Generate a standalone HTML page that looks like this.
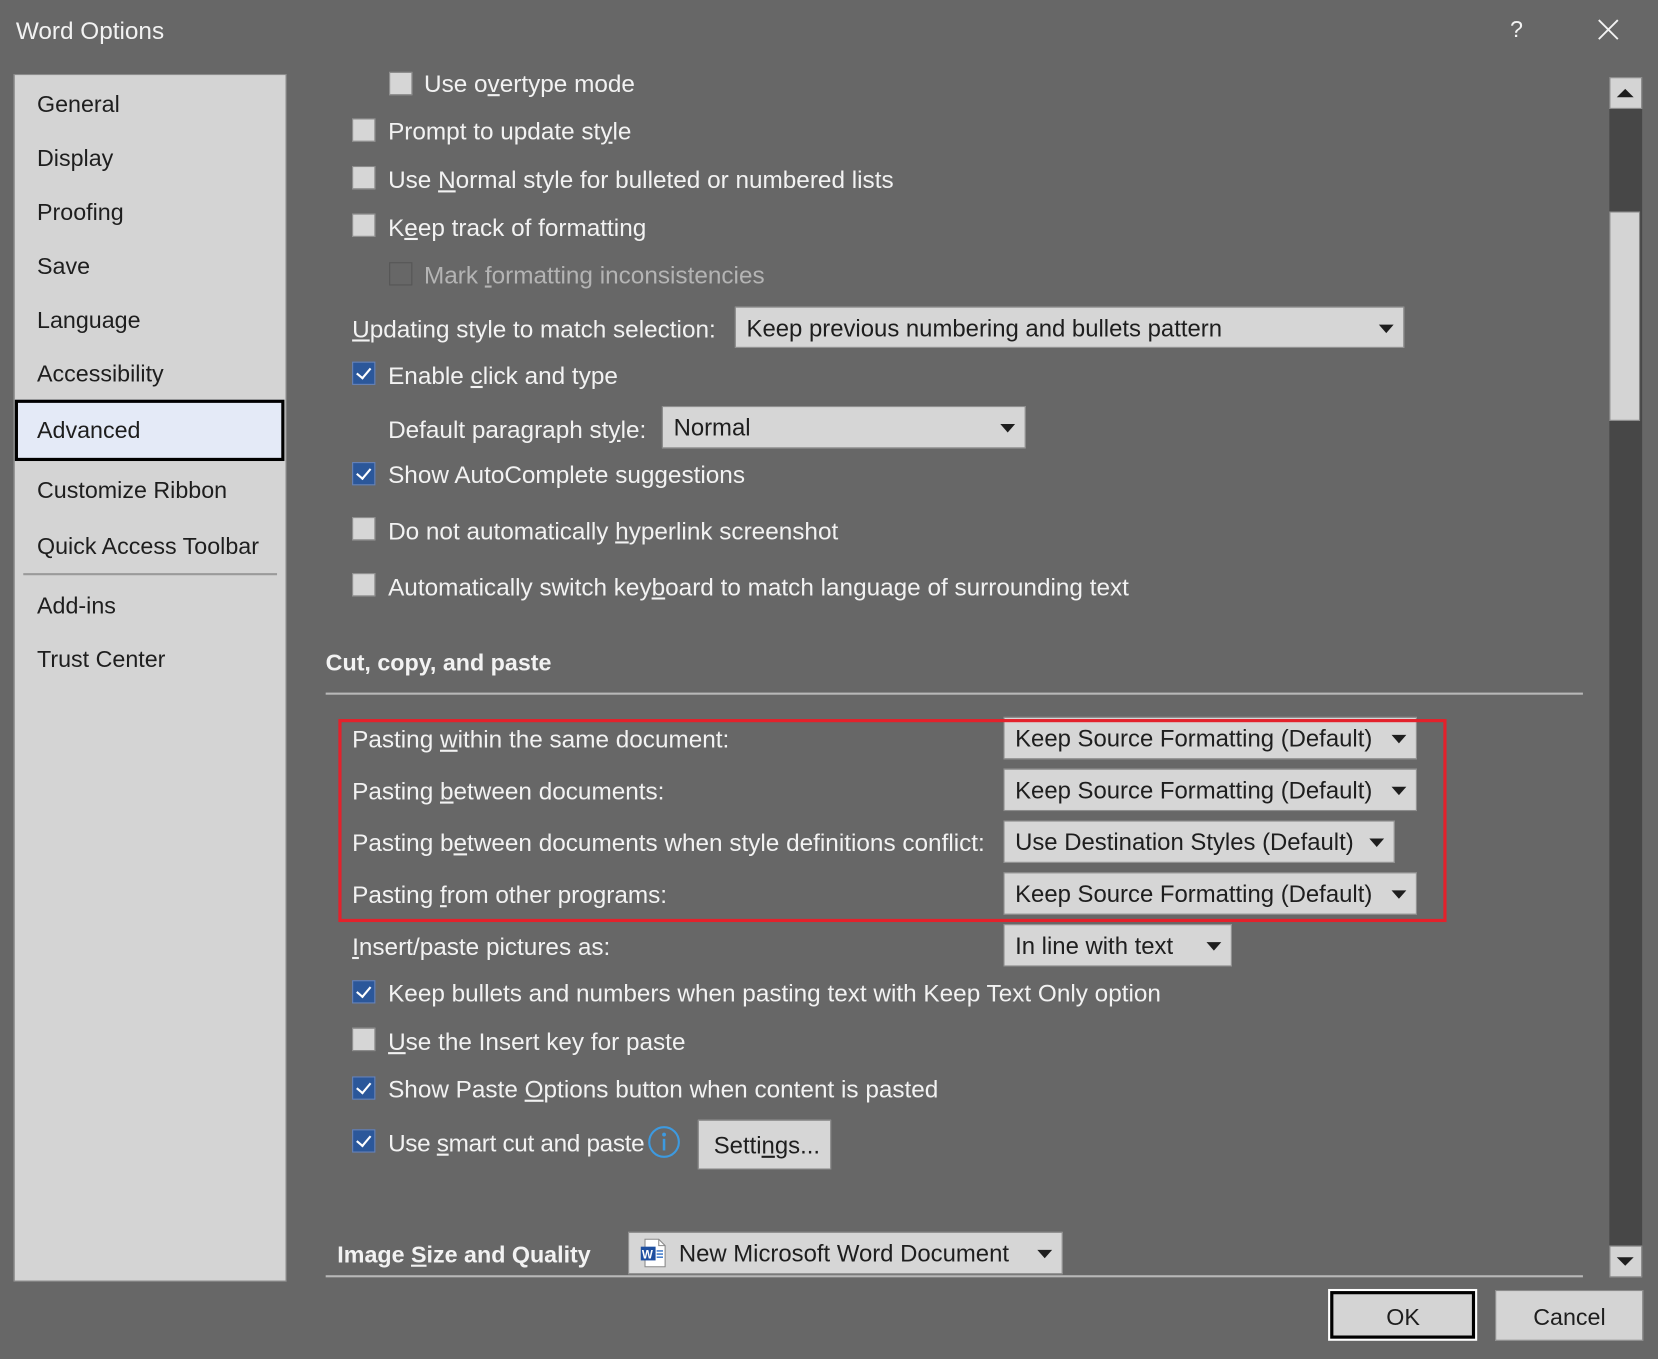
<!DOCTYPE html>
<html><head><meta charset="utf-8"><style>
html,body{margin:0;padding:0;background:#676767;width:1658px;height:1359px;overflow:hidden}
#w{position:absolute;left:0;top:0;width:1568px;height:1285px;transform:scale(1.05740);transform-origin:0 0;font-family:"Liberation Sans",sans-serif;color:#f2f2f2;font-size:23px}
.t{position:absolute;line-height:28px;white-space:nowrap}
.s{font-size:22px}
.d{color:#1e1e1e}
.cb{position:absolute;width:20px;height:20px;background:#d6d6d6;border:1px solid #8a8a8a}
.ck{background:#2b579a;border:1px solid #6a85b8}
.ck:after{content:"";position:absolute;left:6px;top:2px;width:6px;height:11px;border:solid #fff;border-width:0 2px 2px 0;transform:rotate(40deg)}
.dd{position:absolute;background:#d6d6d6;border:1px solid #8c8c8c;box-sizing:border-box;color:#1e1e1e;font-size:22.6px}
.dd span{position:absolute;left:10px;top:50%;margin-top:-13px;line-height:28px;white-space:nowrap}
.dd i{position:absolute;right:9px;top:50%;margin-top:-3px;width:0;height:0;border-left:7px solid transparent;border-right:7px solid transparent;border-top:8px solid #1e1e1e}
u{text-decoration:underline;text-underline-offset:2px}
.b{font-weight:bold;font-size:22px}
</style></head><body><div id="w">
<div class="t" style="left:15px;top:15px">Word Options</div>
<div class="t" style="left:1428px;top:14px;font-size:22px">?</div>
<svg style="position:absolute;left:1511px;top:18px" width="20" height="20"><path d="M1 1L19 19M19 1L1 19" stroke="#f2f2f2" stroke-width="1.8"/></svg>

<div style="position:absolute;left:13px;top:70px;width:256px;height:1140px;background:#d4d4d4;border:1px solid #8a8a8a"></div>
<div class="t d s" style="left:35px;top:85px">General</div>
<div class="t d s" style="left:35px;top:136px">Display</div>
<div class="t d s" style="left:35px;top:187px">Proofing</div>
<div class="t d s" style="left:35px;top:238px">Save</div>
<div class="t d s" style="left:35px;top:289px">Language</div>
<div class="t d s" style="left:35px;top:340px">Accessibility</div>
<div style="position:absolute;left:14px;top:378px;width:249px;height:52px;background:#e4eaf7;border:3px solid #000"></div>
<div class="t d s" style="left:35px;top:393px">Advanced</div>
<div class="t d s" style="left:35px;top:450px">Customize Ribbon</div>
<div class="t d s" style="left:35px;top:503px">Quick Access Toolbar</div>
<div style="position:absolute;left:22px;top:542px;width:240px;height:2px;background:#9a9a9a"></div>
<div class="t d s" style="left:35px;top:559px">Add-ins</div>
<div class="t d s" style="left:35px;top:610px">Trust Center</div>

<div class="cb" style="left:368px;top:68px"></div><div class="t" style="left:401px;top:65px">Use o<u>v</u>ertype mode</div>
<div class="cb" style="left:333px;top:112px"></div><div class="t" style="left:367px;top:110px">Prompt to update st<u>y</u>le</div>
<div class="cb" style="left:333px;top:157px"></div><div class="t" style="left:367px;top:156px">Use <u>N</u>ormal style for bulleted or numbered lists</div>
<div class="cb" style="left:333px;top:202px"></div><div class="t" style="left:367px;top:201px">K<u>e</u>ep track of formatting</div>
<div class="cb" style="left:368px;top:248px;background:none;border-color:#555"></div><div class="t" style="left:401px;top:246px;color:#b4b4b4">Mark <u>f</u>ormatting inconsistencies</div>
<div class="t" style="left:333px;top:297px"><u>U</u>pdating style to match selection:</div>
<div class="dd" style="left:695px;top:290px;width:633px;height:39px"><span>Keep previous numbering and bullets pattern</span><i></i></div>
<div class="cb ck" style="left:333px;top:342px"></div><div class="t" style="left:367px;top:341px">Enable <u>c</u>lick and type</div>
<div class="t" style="left:367px;top:392px">Default paragraph st<u>y</u>le:</div>
<div class="dd" style="left:626px;top:384px;width:344px;height:40px"><span>Normal</span><i></i></div>
<div class="cb ck" style="left:333px;top:437px"></div><div class="t" style="left:367px;top:435px">Show AutoComplete suggestions</div>
<div class="cb" style="left:333px;top:489px"></div><div class="t" style="left:367px;top:488px">Do not automatically <u>h</u>yperlink screenshot</div>
<div class="cb" style="left:333px;top:542px"></div><div class="t" style="left:367px;top:541px">Automatically switch key<u>b</u>oard to match language of surrounding text</div>

<div class="t b" style="left:308px;top:613px">Cut, copy, and paste</div>
<div style="position:absolute;left:308px;top:655px;width:1189px;height:2px;background:#b8b8b8"></div>

<div class="t" style="left:333px;top:685px">Pasting <u>w</u>ithin the same document:</div>
<div class="dd" style="left:949px;top:678px;width:391px;height:40px"><span>Keep Source Formatting (Default)</span><i></i></div>
<div class="t" style="left:333px;top:734px">Pasting <u>b</u>etween documents:</div>
<div class="dd" style="left:949px;top:727px;width:391px;height:40px"><span>Keep Source Formatting (Default)</span><i></i></div>
<div class="t" style="left:333px;top:783px">Pasting b<u>e</u>tween documents when style definitions conflict:</div>
<div class="dd" style="left:949px;top:776px;width:370px;height:40px"><span>Use Destination Styles (Default)</span><i></i></div>
<div class="t" style="left:333px;top:832px">Pasting <u>f</u>rom other programs:</div>
<div class="dd" style="left:949px;top:825px;width:391px;height:40px"><span>Keep Source Formatting (Default)</span><i></i></div>
<div style="position:absolute;left:320px;top:680px;width:1042px;height:186px;border:3px solid #e3212b"></div>

<div class="t" style="left:333px;top:881px"><u>I</u>nsert/paste pictures as:</div>
<div class="dd" style="left:949px;top:874px;width:216px;height:40px"><span>In line with text</span><i></i></div>
<div class="cb ck" style="left:333px;top:927px"></div><div class="t" style="left:367px;top:925px">Keep bullets and numbers when pasting text with Keep Text Only option</div>
<div class="cb" style="left:333px;top:972px"></div><div class="t" style="left:367px;top:971px"><u>U</u>se the Insert key for paste</div>
<div class="cb ck" style="left:333px;top:1018px"></div><div class="t" style="left:367px;top:1016px">Show Paste <u>O</u>ptions button when content is pasted</div>
<div class="cb ck" style="left:333px;top:1068px"></div><div class="t" style="left:367px;top:1067px;letter-spacing:-0.3px">Use <u>s</u>mart cut and paste</div>
<svg style="position:absolute;left:612px;top:1064px" width="32" height="32"><circle cx="16" cy="16" r="14" fill="none" stroke="#3d9ae0" stroke-width="2"/><circle cx="16" cy="9" r="1.8" fill="#3d9ae0"/><rect x="14.8" y="13" width="2.4" height="11" fill="#3d9ae0"/></svg>
<div class="dd" style="left:660px;top:1059px;width:126px;height:47px"><span style="left:14px">Setti<u>n</u>gs...</span></div>

<div class="t b" style="left:319px;top:1173px">Image <u>S</u>ize and Quality</div>
<div class="dd" style="left:594px;top:1165px;width:411px;height:40px"><span style="left:47px">New Microsoft Word Document</span><i></i>
<svg style="position:absolute;left:9px;top:5px" width="28" height="28"><path d="M6 1H19L25 7V27H6Z" fill="#fff" stroke="#888" stroke-width="1"/><path d="M19 1V7H25" fill="none" stroke="#888"/><rect x="2" y="8" width="14" height="13" fill="#1e4fa0"/><text x="3" y="19" font-size="11" font-weight="bold" fill="#fff" font-family="Liberation Sans">W</text><path d="M17 12H23M17 15H23M17 18H23" stroke="#2b6cc4" stroke-width="1.3"/></svg></div>
<div style="position:absolute;left:308px;top:1206px;width:1189px;height:2px;background:#b8b8b8"></div>

<div style="position:absolute;left:1522px;top:73px;width:31px;height:1135px;background:#474747"></div>
<div style="position:absolute;left:1522px;top:73px;width:29px;height:28px;background:#d4d4d4;border:1px solid #888"></div>
<div style="position:absolute;left:1529px;top:84px;border-left:8px solid transparent;border-right:8px solid transparent;border-bottom:8px solid #1e1e1e"></div>
<div style="position:absolute;left:1522px;top:200px;width:29px;height:198px;background:#d4d4d4;border:1px solid #888;box-sizing:border-box"></div>
<div style="position:absolute;left:1522px;top:1178px;width:29px;height:28px;background:#d4d4d4;border:1px solid #888"></div>
<div style="position:absolute;left:1529px;top:1189px;border-left:8px solid transparent;border-right:8px solid transparent;border-top:8px solid #1e1e1e"></div>

<div style="position:absolute;left:1256px;top:1219px;width:141px;height:49px;background:#fff"></div>
<div style="position:absolute;left:1258px;top:1221px;width:137px;height:45px;background:#d4d4d4;border:3px solid #000;box-sizing:border-box"></div>
<div class="t d s" style="left:1311px;top:1232px">OK</div>
<div style="position:absolute;left:1414px;top:1220px;width:140px;height:48px;background:#d4d4d4;border:1px solid #888;box-sizing:border-box"></div>
<div class="t d s" style="left:1450px;top:1232px">Cancel</div>
</div></body></html>
